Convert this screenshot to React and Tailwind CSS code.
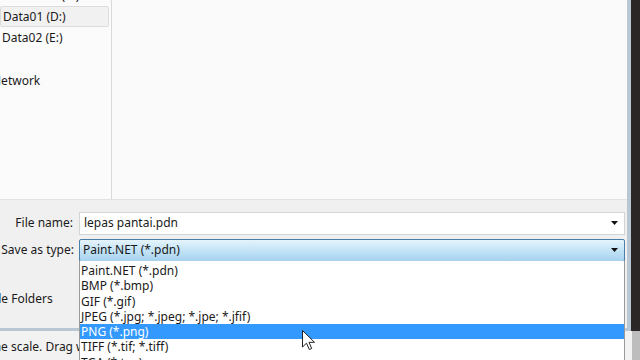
import React from "react";

const types = [
  "Paint.NET (*.pdn)",
  "BMP (*.bmp)",
  "GIF (*.gif)",
  "JPEG (*.jpg; *.jpeg; *.jpe; *.jfif)",
  "PNG (*.png)",
  "TIFF (*.tif; *.tiff)",
  "TGA (*.tga)",
];

function Arrow() {
  return (
    <svg width="7" height="4" viewBox="0 0 7 4">
      <path d="M0 0h7L3.5 4z" fill="#111" />
    </svg>
  );
}

function Cursor() {
  return (
    <svg width="13" height="21" viewBox="0 0 13 21" className="absolute left-[302px] top-[330px]">
      <path
        d="M0.5 0.5v16.5l4-3.8 2.8 6.3 2.4-1-2.7-6.2h5.5z"
        fill="#fff"
        stroke="#222"
        strokeWidth="1"
        strokeLinejoin="round"
      />
    </svg>
  );
}

export default function App() {
  const font = { fontFamily: '"Noto Sans", "Open Sans", sans-serif' };
  return (
    <div className="relative w-[640px] h-[360px] overflow-hidden bg-[#2b2726] text-[12px] text-[#1a1a1a]" style={font}>
      {/* dialog */}
      <div className="flex flex-col w-[631px] h-[331px] bg-[#f0f0f0] border-r-[4px] border-b-[3px] border-[#b9c6d3]">
        {/* browser area */}
        <div className="flex h-[200px] border-b border-[#e2e2e2]">
          <div className="w-[111px] bg-[#fbfbfb] flex flex-col">
            <div className="h-[6px] relative">
              <span className="absolute -top-[13px] left-[2px] whitespace-nowrap">Local Disk (C:)</span>
            </div>
            <div className="h-[21px] flex items-center pl-[2px] bg-[#f1f1f1] border border-[#dcdcdc] rounded-[2px] mr-[2px]">
              Data01 (D:)
            </div>
            <div className="h-[22px] flex items-center pl-[2px]">Data02 (E:)</div>
            <div className="h-[21px]" />
            <div className="h-[22px] flex items-center -ml-[8px]">Network</div>
          </div>
          <div className="w-px bg-[#d9d9d9]" />
          <div className="flex-1 bg-[#fafafa]" />
        </div>

        {/* form area */}
        <div className="flex-1 flex flex-col pt-[11px] pr-[2px]">
          <div className="flex items-center h-[24px]">
            <div className="w-[74px] text-right pr-[1px]">File name:</div>
            <div className="ml-[5px] flex-1 h-[23px] bg-white border border-[#d4d4d4] flex items-center pl-[4px] pr-[6px]">
              <span className="flex-1">lepas pantai.pdn</span>
              <Arrow />
            </div>
          </div>
          <div className="flex items-center h-[24px] mt-[3px]">
            <div className="w-[74px] text-right">Save as type:</div>
            <div className="ml-[5px] flex-1 h-[23px] rounded-[2px] border border-[#4a7ea6] bg-gradient-to-b from-[#e6f4fc] via-[#c3e3f6] to-[#a6d3ef] flex items-center pl-[3px] pr-[6px]">
              <span className="flex-1">Paint.NET (*.pdn)</span>
              <Arrow />
            </div>
          </div>
          <div className="mt-[28px] -ml-[18px] whitespace-nowrap">Hide Folders</div>
        </div>
      </div>

      {/* paint.net status bar behind */}
      <div className="h-[29px] bg-[#f2f2f2] flex items-center -ml-[13px] pt-[2px]">
        <span className="whitespace-nowrap">The scale. Drag with the mouse to pan.</span>
      </div>
      <div className="absolute right-0 bottom-0 w-[8px] h-[29px] bg-[#bdbdbd]" />

      {/* dropdown list */}
      <div className="absolute left-[79px] top-[261px] w-[546px] h-[110px] bg-white border border-[#9a9a9a] border-t-0 flex flex-col pt-[2px]">
        {types.map((t, i) => (
          <div
            key={t}
            className={`h-[15.3px] leading-[15px] pl-[1px] whitespace-nowrap ${i === 4 ? "bg-[#3399ff] text-white" : ""}`}
          >
            {t}
          </div>
        ))}
      </div>

      <Cursor />
    </div>
  );
}
